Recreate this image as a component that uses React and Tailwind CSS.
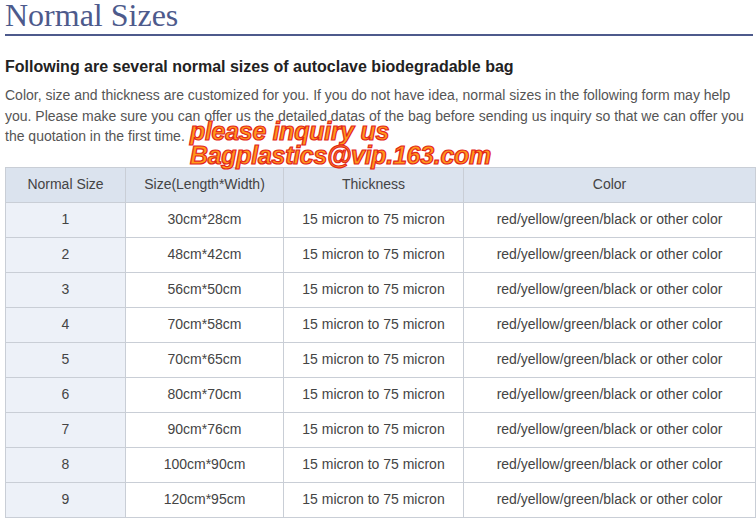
export default function App() {
  const rows = [
    ["1", "30cm*28cm"],
    ["2", "48cm*42cm"],
    ["3", "56cm*50cm"],
    ["4", "70cm*58cm"],
    ["5", "70cm*65cm"],
    ["6", "80cm*70cm"],
    ["7", "90cm*76cm"],
    ["8", "100cm*90cm"],
    ["9", "120cm*95cm"],
  ];

  return (
    <div className="relative w-[756px] h-[520px] overflow-hidden bg-white font-['Liberation_Sans',Arial,sans-serif]">
      {/* Title */}
      <div className="pl-[5px] pr-[3px]">
        <h1 className="h-[36px] border-b-2 border-[#4d5a8c] font-['Liberation_Serif',serif] text-[32px] leading-[31px] text-[#4d5a8c]">
          Normal Sizes
        </h1>
      </div>

      <div className="px-[5px]">
        <h2 className="mt-[21px] text-[16px] font-bold leading-[20px] text-[#222]">
          Following are several normal sizes of autoclave biodegradable bag
        </h2>
        <p className="mt-[8px] text-[14px] leading-[20.5px] text-[#555]">
          Color, size and thickness are customized for you. If you do not have idea, normal sizes in the following form may help you. Please make sure you can offer us the detailed datas of the bag before sending us inquiry so that we can offer you the quotation in the first time.
        </p>

        <table className="mt-[20px] w-[750px] table-fixed border-collapse text-center text-[14px] text-[#444]">
          <colgroup>
            <col className="w-[120px]" />
            <col className="w-[158px]" />
            <col className="w-[180px]" />
            <col className="w-[292px]" />
          </colgroup>
          <thead>
            <tr className="h-[35px] bg-[#dbe3ee]">
              <th className="border border-[#c9ced6] font-normal">Normal Size</th>
              <th className="border border-[#c9ced6] font-normal">Size(Length*Width)</th>
              <th className="border border-[#c9ced6] font-normal">Thickness</th>
              <th className="border border-[#c9ced6] font-normal">Color</th>
            </tr>
          </thead>
          <tbody>
            {rows.map(([n, size]) => (
              <tr key={n} className="h-[35px]">
                <td className="border border-[#c9ced6] bg-[#edf1f8]">{n}</td>
                <td className="border border-[#c9ced6]">{size}</td>
                <td className="border border-[#c9ced6]">15 micron to 75 micron</td>
                <td className="border border-[#c9ced6]">red/yellow/green/black or other color</td>
              </tr>
            ))}
          </tbody>
        </table>
      </div>

      {/* Watermark */}
      <div className="absolute left-[190px] top-[119px] font-['Liberation_Sans',Arial,sans-serif] text-[25px] font-bold italic leading-[24px] tracking-[-0.3px] text-[#ff9a1a] [-webkit-text-stroke:1.2px_#e3261b]">
        <div>please inquiry us</div>
        <div>Bagplastics@vip.163.com</div>
      </div>
    </div>
  );
}
